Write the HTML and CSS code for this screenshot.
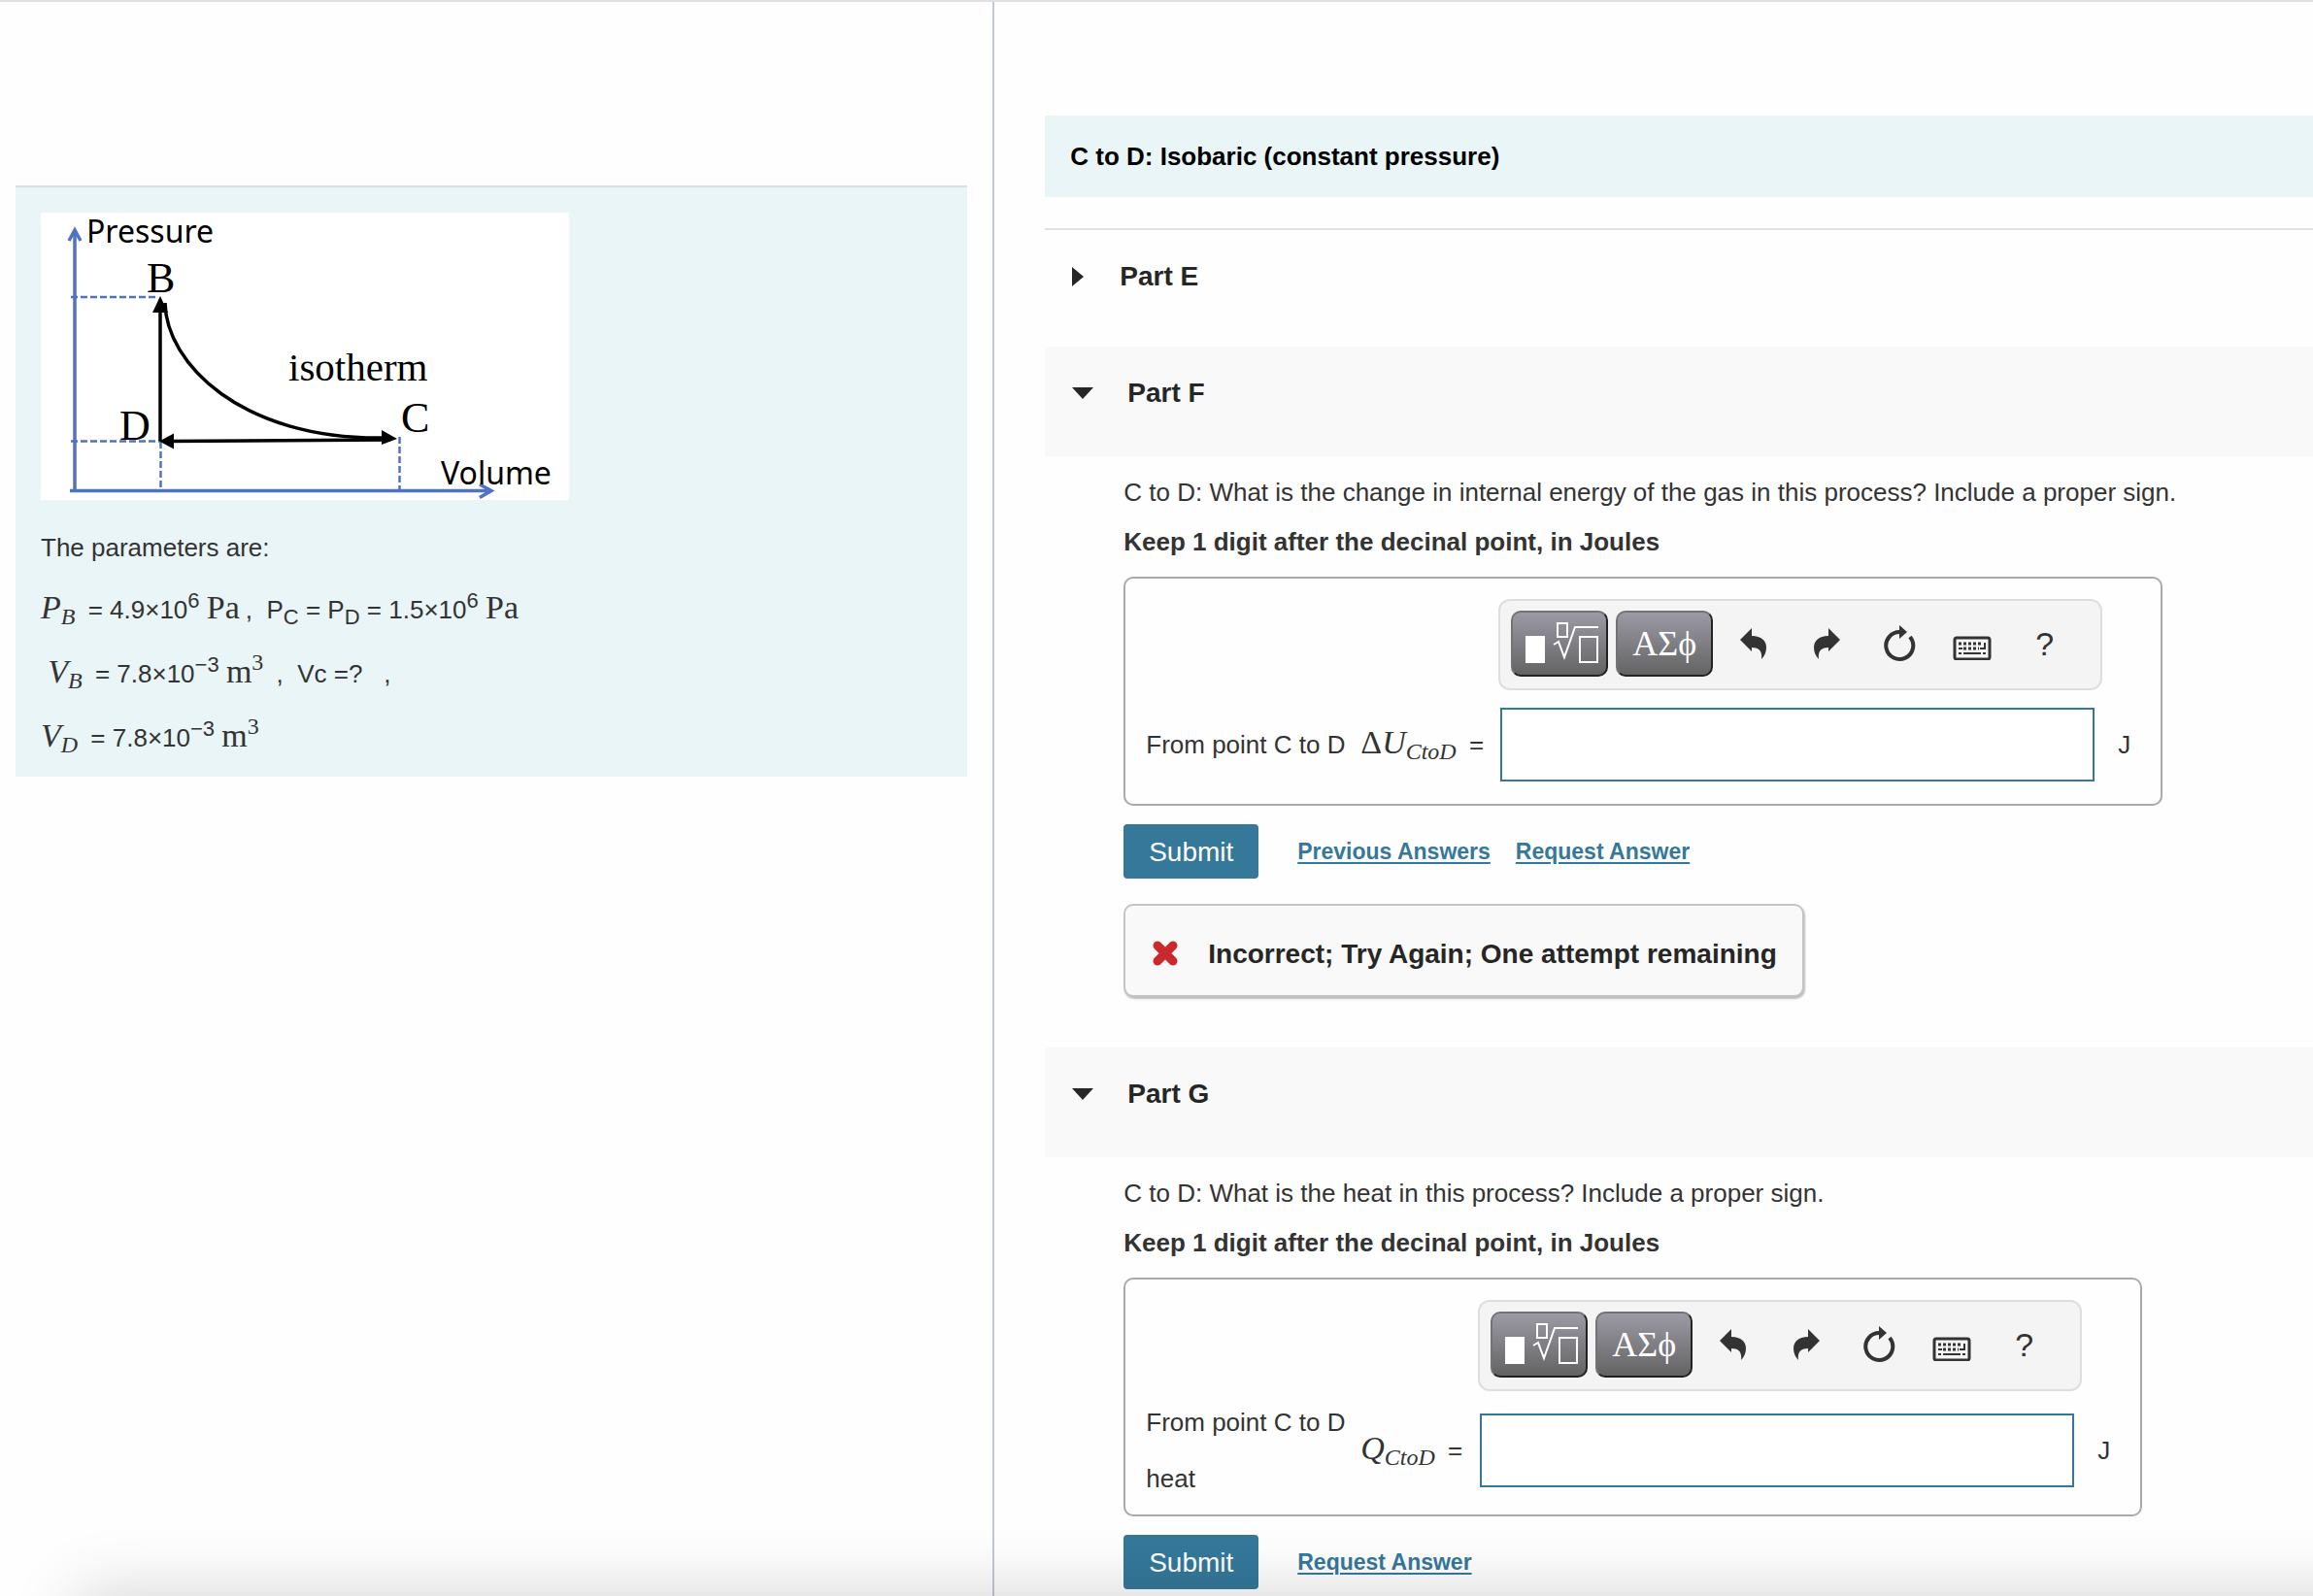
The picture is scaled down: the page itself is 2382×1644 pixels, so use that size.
FILE: index.html
```html
<!doctype html>
<html lang="en">
<head>
<meta charset="utf-8">
    <meta name="viewport" content="width=device-width, initial-scale=1.0">
<title>C to D: Isobaric</title>
	<link rel="stylesheet" href="styles.css">
</head>

<body>
	<!-- icons used by both toolbars -->
	<svg class="sprite" aria-hidden="true">
		<symbol id="i-templates" viewBox="0 0 96 64">
			<path d="M13 24h20v28H13z" fill="#fff"/>
			<path d="M46 11h10v14H46zM69 25h18v26H69z" fill="none" stroke="#fff" stroke-width="2"/>
			<path d="M42 33l5-3 6 16 11-31h24" fill="none" stroke="#fff" stroke-width="2"/>
		</symbol>
		<symbol id="i-undo" viewBox="0 0 28 34">
			<path d="M0 13L12 1v8c10 0 15 5 15 12 0 5-2 9-5 12 1-8-2-12-10-12v4z" fill="#333"/>
		</symbol>
		<symbol id="i-redo" viewBox="0 0 28 34">
			<path d="M28 13L16 1v8C6 9 1 14 1 21c0 5 2 9 5 12-1-8 2-12 10-12v4z" fill="#333"/>
		</symbol>
		<symbol id="i-reset" viewBox="0 0 34 38">
			<path d="M18 7A14 14 0 1 0 28 12" fill="none" stroke="#333" stroke-width="4"/>
			<path d="M17 0l8 7-8 7z" fill="#333"/>
		</symbol>
		<symbol id="i-keyboard" viewBox="0 0 40 34">
			<rect x="2" y="11" width="36" height="22" rx="2" fill="none" stroke="#333" stroke-width="3"/>
			<path d="M6 17h24M11 22h16" fill="none" stroke="#333" stroke-width="3" stroke-dasharray="3 2"/>
			<path d="M6 22h4M28 22h6M33 16v6M11 27h18M6 27h3M31 27h3" fill="none" stroke="#333" stroke-width="2"/>
		</symbol>
		<symbol id="i-wrong" viewBox="0 0 28 28">
			<path d="M6 6l16 16M22 6L6 22" stroke="#c9282d" stroke-width="9" stroke-linecap="round"/>
		</symbol>
	</svg>
	<div class="page">
		<aside class="left">
			<div class="intro">
				<svg class="diagram" viewBox="0 0 544 296" role="img" aria-label="Pressure and volume diagram">
					<rect width="544" height="296" fill="#fff"/>
					<g fill="none" stroke="#4f73c2">
						<path d="M35 287V20M30 286.500h430" stroke-width="3.500"/>
						<path d="M29 29l6-11 6 11M452 280l12 6.500-12 7" stroke-width="3.500"/>
						<path d="M31 87h88M31 235.500h92M123.500 236v50M369.500 231v55" stroke-width="2.500" stroke-dasharray="7 3"/>
					</g>
					<g fill="none" stroke="#000" stroke-width="3.500">
						<path d="M123 235V98M130 235.500L360 234"/>
						<path d="M128 93c1 62 78 141 225 139"/>
					</g>
					<path d="M123 86l8 17h-16zM122 235.500l15-8v16zM367 233l-16-9v15z"/>
					<text class="sans" x="47" y="31">Pressure</text>
					<text class="sans" x="412" y="280">Volume</text>
					<text class="point" x="109" y="82">B</text>
					<text class="point" x="81" y="234">D</text>
					<text class="point" x="371" y="226">C</text>
					<text class="curve" x="255" y="173">isotherm</text>
				</svg>
				<p class="first">The parameters are:</p>
				<p><span class="math"><i>P<sub>B</sub></i></span> = 4.9×10<sup>6</sup> <span class="math">Pa</span>,&nbsp; P<sub>C</sub> = P<sub>D</sub> = 1.5×10<sup>6</sup> <span class="math">Pa</span></p>
				<p>&nbsp;<span class="math"><i>V<sub>B</sub></i></span> = 7.8×10<sup>−3</sup> <span class="math">m<sup>3</sup></span> ,&nbsp; Vc =?&nbsp;&nbsp; ,</p>
				<p><span class="math"><i>V<sub>D</sub></i></span> = 7.8×10<sup>−3</sup> <span class="math">m<sup>3</sup></span></p>
			</div>
		</aside>

		<main class="right">
			<h1 class="banner">C to D: Isobaric (constant pressure)</h1>
			<hr>
			<h2><button type="button" class="part closed" aria-expanded="false"><span class="arrow"></span>Part E</button></h2>

			<h2><button type="button" class="part open" aria-expanded="true"><span class="arrow"></span>Part F</button></h2>
			<form class="question">
				<p>C to D: What is the change in internal energy of the gas in this process? Include a proper sign.</p>
				<p><b>Keep 1 digit after the decinal point, in Joules</b></p>
				<div class="answer">
					<div class="toolbar">
						<button type="button" class="dark" aria-label="Templates"><svg width="96" height="64"><use href="#i-templates"/></svg></button>
						<button type="button" class="dark">ΑΣϕ</button>
						<button type="button" class="tool" aria-label="Undo"><svg width="28" height="34"><use href="#i-undo"/></svg></button>
						<button type="button" class="tool" aria-label="Redo"><svg width="28" height="34"><use href="#i-redo"/></svg></button>
						<button type="button" class="tool" aria-label="Reset"><svg width="34" height="38"><use href="#i-reset"/></svg></button>
						<button type="button" class="tool" aria-label="Keyboard shortcuts"><svg width="40" height="34"><use href="#i-keyboard"/></svg></button>
						<button type="button" class="tool">?</button>
					</div>
					<label class="name" for="answer-f">From point C to D</label>
					<span class="symbol energy"><span class="math">Δ<i>U<sub>CtoD</sub></i></span> =</span>
					<input type="text" id="answer-f">
					<span class="unit">J</span>
				</div>
				<div class="actions">
					<button type="submit" class="submit">Submit</button>
					<a href="#">Previous Answers</a>
					<a href="#">Request Answer</a>
				</div>
				<div class="feedback"><svg width="28" height="28"><use href="#i-wrong"/></svg>Incorrect; Try Again; One attempt remaining</div>
			</form>

			<h2><button type="button" class="part open" aria-expanded="true"><span class="arrow"></span>Part G</button></h2>
			<form class="question">
				<p>C to D: What is the heat in this process? Include a proper sign.</p>
				<p><b>Keep 1 digit after the decinal point, in Joules</b></p>
				<div class="answer">
					<div class="toolbar">
						<button type="button" class="dark" aria-label="Templates"><svg width="96" height="64"><use href="#i-templates"/></svg></button>
						<button type="button" class="dark">ΑΣϕ</button>
						<button type="button" class="tool" aria-label="Undo"><svg width="28" height="34"><use href="#i-undo"/></svg></button>
						<button type="button" class="tool" aria-label="Redo"><svg width="28" height="34"><use href="#i-redo"/></svg></button>
						<button type="button" class="tool" aria-label="Reset"><svg width="34" height="38"><use href="#i-reset"/></svg></button>
						<button type="button" class="tool" aria-label="Keyboard shortcuts"><svg width="40" height="34"><use href="#i-keyboard"/></svg></button>
						<button type="button" class="tool">?</button>
					</div>
					<label class="name" for="answer-g">From point C to D heat</label>
					<span class="symbol"><span class="math"><i>Q<sub>CtoD</sub></i></span> =</span>
					<input type="text" id="answer-g">
					<span class="unit">J</span>
				</div>
				<div class="actions">
					<button type="submit" class="submit">Submit</button>
					<a href="#">Request Answer</a>
				</div>
			</form>
		</main>
	</div>
	<div class="shade"></div>
</body>
</html>
```
FILE: styles.css
```css
* {
  box-sizing: border-box;
  margin: 0;
  padding: 0;
}
body {
  background-color: #fefefe;
  color: #333;
  font: 26px/51px "Liberation Sans", Arial, sans-serif;
  overflow: hidden;
}
.sprite {
  position: absolute;
  width: 0;
  height: 0;
}
.page {
  display: flex;
  min-height: 100vh;
  border-top: 2px solid #e0e0e0;
}

/* left column */
.left {
  width: 43%;
  border-right: 2px solid #c3c9d0;
  padding: 189px 26px 0 16px;
}
.intro {
  background-color: #e9f5f7;
  border-top: 2px solid #dcdfdf;
  padding: 26px 26px 7px;
}
.intro p {
  line-height: 66px;
  white-space: nowrap;
}
.intro .first {
  line-height: 62px;
  padding-top: 18px;
}
.diagram {
  display: block;
  width: 544px;
  height: 296px;
  overflow: visible;
}
.diagram .sans {
  font: 32px "Noto Sans", sans-serif;
}
.diagram .point {
  font: 44px "Liberation Serif", serif;
}
.diagram .curve {
  font: 41px "Liberation Serif", serif;
}
sub,
sup {
  font-size: 22px;
  line-height: 0;
  vertical-align: -6px;
}
sup {
  vertical-align: 11px;
}
.math {
  font-family: "Liberation Serif", serif;
  font-size: 34px;
  line-height: 0;
  margin-right: 6px;
}
.math sub,
.math sup {
  font-size: 24px;
}
.math sup {
  vertical-align: 13px;
}

/* right column */
.right {
  flex: 1;
  padding: 117px 0 0 52px;
}
.banner {
  background-color: #e9f5f7;
  color: #000;
  font-size: 26px;
  line-height: 84px;
  padding-left: 26px;
}
hr {
  border: 0;
  border-top: 2px solid #e0e0e0;
  margin-top: 32px;
}
button {
  border: 0;
  background: none;
  color: inherit;
  font: inherit;
}
.part {
  display: flex;
  align-items: center;
  width: 100%;
  color: #262626;
  font-size: 28px;
  font-weight: bold;
  padding-left: 28px;
}
.closed {
  height: 120px;
  padding-bottom: 25px;
}
.open {
  height: 113px;
  padding-bottom: 18px;
  background-color: #f9f9f9;
}
.closed .arrow {
  border: 10px solid transparent;
  border-left: 12px solid #262626;
  border-right: 0;
  margin-right: 37px;
}
.open .arrow {
  border: 11px solid transparent;
  border-top: 12px solid #262626;
  border-bottom: 0;
  margin-right: 35px;
}
.question {
  padding: 12px 0 52px 81px;
}
.answer {
  display: inline-grid;
  grid-template-columns: 221px auto auto auto;
  grid-template-rows: auto minmax(106px, auto);
  align-items: center;
  row-gap: 3px;
  border: 2px solid #a9a9a9;
  border-radius: 10px;
  padding: 21px 31px 8px 21px;
  vertical-align: top;
  margin-top: 10px;
}
.toolbar {
  grid-column: 3 / 5;
  justify-self: start;
  display: flex;
  gap: 8px;
  width: 622px;
  height: 94px;
  margin-left: -2px;
  padding: 10px 11px;
  background-color: #f4f4f4;
  border: 2px solid #dedede;
  border-radius: 12px;
}
.dark {
  width: 100px;
  height: 68px;
  background: linear-gradient(#9c9aa5, #636363);
  border: 2px solid #737373;
  border-right-color: #222;
  border-bottom-color: #222;
  border-radius: 10px;
  color: #fff;
  font: 36px "Liberation Serif", serif;
}
.tool {
  width: 67px;
  height: 68px;
  font-size: 34px;
}
.tool svg,
.dark svg {
  display: block;
  margin: auto;
}
.name {
  grid-column: 1;
  width: 212px;
  line-height: 58px;
}
.symbol {
  width: 123px;
  white-space: nowrap;
}
.energy {
  width: 144px;
}
.answer input {
  width: 612px;
  height: 76px;
  background-color: #fff;
  border: 2px solid #35789a;
  font: inherit;
  padding: 0 12px;
}
.unit {
  padding-left: 24px;
}
.actions {
  display: flex;
  align-items: center;
  gap: 26px;
  margin-top: 19px;
}
.submit {
  width: 139px;
  height: 56px;
  background-color: #35789a;
  border-radius: 4px;
  color: #fff;
  font-size: 28px;
  margin-right: 14px;
}
.actions a {
  color: #35789a;
  font-size: 23px;
  font-weight: bold;
  text-underline-offset: 3px;
}
.feedback {
  display: flex;
  align-items: center;
  gap: 30px;
  width: 701px;
  height: 96px;
  margin-top: 26px;
  padding: 6px 0 0 27px;
  background-color: #f9f9f9;
  border: 2px solid #c4c4c4;
  border-radius: 10px;
  box-shadow: 1px 2px 2px #bbb;
  color: #262626;
  font-size: 28px;
  font-weight: bold;
}

/* soft shadow along the bottom edge of the window */
.shade {
  position: fixed;
  left: 80px;
  right: -100px;
  top: 100%;
  height: 200px;
  box-shadow: 0 0 70px rgba(0, 0, 0, 0.18);
}
```
